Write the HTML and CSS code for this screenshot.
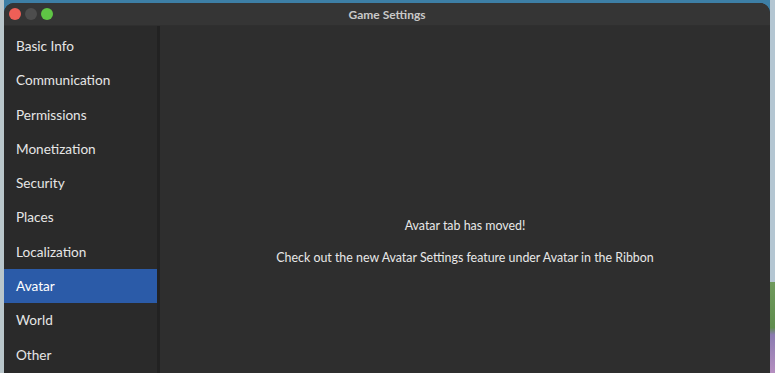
FILE: index.html
```html
<!DOCTYPE html>
<html lang="en">

<head>
  <meta charset="UTF-8">
  <meta name="viewport" content="width=device-width, initial-scale=1">
  <title>Game Settings</title>
  <link rel="stylesheet" href="styles.css">
</head>

<body>

  <div class="window">
    <div class="titlebar">
      <div class="lights">
        <span class="light red"></span>
        <span class="light gray"></span>
        <span class="light green"></span>
      </div>
      <div class="title">Game Settings</div>
    </div>

    <div class="content">
      <!-- Left menu -->
      <ul class="menu">
        <li>Basic Info</li>
        <li>Communication</li>
        <li>Permissions</li>
        <li>Monetization</li>
        <li>Security</li>
        <li>Places</li>
        <li>Localization</li>
        <li class="active">Avatar</li>
        <li>World</li>
        <li>Other</li>
      </ul>
      <div class="divider"></div>

      <!-- Main panel -->
      <div class="panel">
        <p>Avatar tab has moved!</p>
        <p>Check out the new Avatar Settings feature under Avatar in the Ribbon</p>
      </div>
    </div>
  </div>

</body>

</html>
```

FILE: styles.css
```css
body {
  margin: 0;
  padding: 0;
  height: 373px;
  overflow: hidden;
  background: linear-gradient(to right, #b9c6cb 0, #b9c6cb 4px, #3d7fa6 4px, #3d7fa6 770px, #b4c6d2 770px);
  font-family: Lato, "Open Sans", Arial, sans-serif;
  position: relative;
}

/* bit of the scene peeking out on the right */
body::after {
  content: "";
  position: absolute;
  right: 0;
  top: 282px;
  width: 5px;
  height: 91px;
  background: linear-gradient(to bottom, #6f9a5c 0, #5f8d4e 50%, #8a7bb0 58%, #b58fc0 100%);
}

.window {
  margin: 3px 5px 0 4px;
  height: 370px;
  border-radius: 10px 10px 0 0;
  overflow: hidden;
  background: #2b2b2b;
  display: flex;
  flex-direction: column;
}

.titlebar {
  height: 22px;
  flex-shrink: 0;
  background: #353535;
  border-bottom: 1px solid #2f2f2f;
  display: flex;
  align-items: center;
  position: relative;
}

.lights {
  display: flex;
  gap: 4px;
  padding-left: 5px;
}

.light {
  width: 12px;
  height: 12px;
  border-radius: 50%;
}

.red {
  background: #ee5f57;
}

.gray {
  background: #4d4d4d;
}

.green {
  background: #5fc545;
}

.title {
  position: absolute;
  left: 0;
  right: 0;
  text-align: center;
  font-size: 12px;
  font-weight: bold;
  color: #c9c9c9;
}

.content {
  flex: 1;
  display: flex;
  min-height: 0;
}

.menu {
  list-style: none;
  margin: 0;
  padding: 3px 0 0;
  width: 153px;
  background: #2a2a2a;
}

.menu li {
  height: 34.3px;
  line-height: 34px;
  padding-left: 12px;
  font-size: 13.6px;
  color: #e6e6e6;
}

.menu li.active {
  background: #2b5ba8;
  color: #ffffff;
}

.divider {
  width: 3px;
  background: #222222;
}

.panel {
  flex: 1;
  background: #2e2e2e;
  display: flex;
  flex-direction: column;
  justify-content: center;
  align-items: center;
  gap: 13px;
  padding-top: 83px;
  color: #e8e8e8;
  font-size: 12.4px;
}

.panel p {
  margin: 0;
  line-height: 19px;
}
```
